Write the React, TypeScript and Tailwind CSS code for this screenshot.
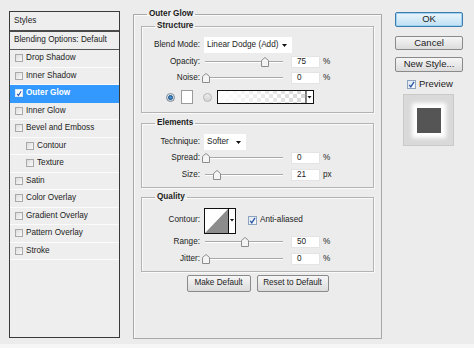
import React from 'react';

const styleItems = [
  { label: 'Drop Shadow' },
  { label: 'Inner Shadow' },
  { label: 'Outer Glow', on: true },
  { label: 'Inner Glow' },
  { label: 'Bevel and Emboss' },
  { label: 'Contour', sub: true },
  { label: 'Texture', sub: true },
  { label: 'Satin' },
  { label: 'Color Overlay' },
  { label: 'Gradient Overlay' },
  { label: 'Pattern Overlay' },
  { label: 'Stroke' },
];

function Tick() {
  return (
    <svg width="7" height="7" viewBox="0 0 7 7">
      <path d="M1.2 3.8 L2.8 5.8 L6 0.8" fill="none" stroke="#2b56a8" strokeWidth="1.3" />
    </svg>
  );
}

function CheckBox({ on, light }: { on?: boolean; light?: boolean }) {
  return (
    <span
      className={
        'flex h-[8px] w-[8px] shrink-0 items-center justify-center border ' +
        (light ? 'border-[#d8e6f6] bg-white' : 'border-[#a9a9a9] bg-gradient-to-br from-[#dcdcdc] to-[#fafafa]')
      }
    >
      {on && <Tick />}
    </span>
  );
}

function Arrow() {
  return (
    <svg width="5" height="3" viewBox="0 0 5 3">
      <path d="M0 0h5L2.5 3z" fill="#111" />
    </svg>
  );
}

function Slider({ pos }: { pos: number }) {
  return (
    <div className="relative flex h-[16px] w-[78px] items-center">
      <div className="h-[2px] w-full border-t border-[#a8a8a8] bg-white" />
      <svg className="absolute top-[3px]" style={{ left: pos - 4 }} width="8" height="10" viewBox="0 0 8 10">
        <path d="M0.5 3.5 L4 0.5 L7.5 3.5 V9.5 H0.5 Z" fill="#f4f4f4" stroke="#8c8c8c" />
      </svg>
    </div>
  );
}

function SliderRow({ label, value, pos, unit, mt }: { label: string; value: string; pos: number; unit: string; mt?: string }) {
  return (
    <div className={'flex h-[16px] items-center ' + (mt ?? '')}>
      <span className="w-[58px] text-right">{label}</span>
      <div className="ml-[5px]">
        <Slider pos={pos} />
      </div>
      <div className="ml-[8px] h-[12px] w-[29px] border border-[#e4e4e4] bg-white pl-[5px] leading-[10px]">{value}</div>
      <span className="ml-[3px]">{unit}</span>
    </div>
  );
}

function Group({ title, className, children }: { title: string; className?: string; children: React.ReactNode }) {
  return (
    <fieldset className={'w-full border border-[#b3b3b3] shadow-[inset_1px_1px_0_#fafafa,1px_1px_0_#fafafa] ' + (className ?? '')}>
      <legend className="ml-[13px] px-[2px] font-bold leading-[12px]">{title}</legend>
      {children}
    </fieldset>
  );
}

function Button({ children, className }: { children: React.ReactNode; className?: string }) {
  return (
    <div
      className={
        'flex items-center justify-center rounded-[2px] border border-[#8a8a8a] bg-gradient-to-b from-[#f6f6f6] to-[#dcdcdc] ' +
        (className ?? '')
      }
    >
      {children}
    </div>
  );
}

export default function App() {
  return (
    <div className="h-[348px] w-[474px] overflow-hidden border-b-[4px] border-[#f6f6f6] bg-[#ececec] font-['Liberation_Sans',Arial,sans-serif] text-[8.2px] text-[#1c1c1c]">
      <div className="flex pl-[9px] pt-[8px]">
        {/* styles list */}
        <div className="mt-[3px] flex h-[327px] w-[111px] flex-col border border-[#3a3a3a] bg-[#eeeeee]">
          <div className="flex h-[20px] shrink-0 items-center border-b-2 border-[#4a4a4a] pl-[4px]">Styles</div>
          <div className="flex h-[18px] shrink-0 items-center border-b border-[#555] pl-[4px]">Blending Options: Default</div>
          {styleItems.map((it) => (
            <div
              key={it.label}
              className={
                'flex h-[17.5px] shrink-0 items-center gap-[3px] border-b ' +
                (it.sub ? 'pl-[16px] ' : 'pl-[5px] ') +
                (it.on ? 'border-[#3399ff] bg-[#3399ff] font-bold text-white' : 'border-[#fbfbfb]')
              }
            >
              <CheckBox on={it.on} light={it.on} />
              <span>{it.label}</span>
            </div>
          ))}
        </div>

        {/* main panel */}
        <fieldset className="ml-[13px] h-[331px] w-[249px] border border-[#a9a9a9] px-[7px] shadow-[inset_1px_1px_0_#fafafa]">
          <legend className="ml-[6px] px-[2px] font-bold leading-[12px]">Outer Glow</legend>

          <Group title="Structure" className="pb-[8px] pt-[5px]">
            <div className="flex h-[16px] items-center">
              <span className="w-[58px] text-right">Blend Mode:</span>
              <div className="ml-[4px] flex h-[16px] w-[88px] items-center justify-between bg-white pl-[3px] pr-[5px]">
                <span>Linear Dodge (Add)</span>
                <Arrow />
              </div>
            </div>
            <SliderRow label="Opacity:" value="75" pos={60} unit="%" mt="mt-[1px]" />
            <SliderRow label="Noise:" value="0" pos={1} unit="%" />
            <div className="mt-[4px] flex h-[14px] items-center">
              <span className="ml-[24px] flex h-[9px] w-[9px] items-center justify-center rounded-full border border-[#7a8a99] bg-gradient-to-b from-[#e9eef3] to-[#c4ced8]">
                <span className="h-[5px] w-[5px] rounded-full border border-[#1d4f7a] bg-[#3f8ad0]" />
              </span>
              <span className="ml-[6px] h-[14px] w-[12px] border border-[#9a9a9a] bg-white" />
              <span className="ml-[10px] h-[9px] w-[9px] rounded-full border border-[#b5b5b5] bg-gradient-to-b from-[#eeeeee] to-[#d4d4d4]" />
              <svg className="ml-[5px]" width="97" height="14" viewBox="0 0 97 14">
                <defs>
                  <pattern id="chk" width="8" height="8" patternUnits="userSpaceOnUse">
                    <rect width="8" height="8" fill="#fff" />
                    <rect width="4" height="4" fill="#d6d6d6" />
                    <rect x="4" y="4" width="4" height="4" fill="#d6d6d6" />
                  </pattern>
                  <linearGradient id="fade" x1="0" x2="1" y1="0" y2="0">
                    <stop offset="0" stopColor="#fff" stopOpacity="1" />
                    <stop offset="1" stopColor="#fff" stopOpacity="0" />
                  </linearGradient>
                </defs>
                <rect x="1" y="1" width="88" height="12" fill="url(#chk)" />
                <rect x="1" y="1" width="88" height="12" fill="url(#fade)" />
                <rect x="89" y="1" width="7" height="12" fill="#fff" />
                <path d="M90.5 6h4L92.5 8.5z" fill="#111" />
                <rect x="0.5" y="0.5" width="96" height="13" fill="none" stroke="#111" />
                <line x1="89" y1="1" x2="89" y2="13" stroke="#111" />
              </svg>
            </div>
          </Group>

          <Group title="Elements" className="mt-[4px] pb-[4px] pt-[5px]">
            <div className="flex h-[16px] items-center">
              <span className="w-[58px] text-right">Technique:</span>
              <div className="ml-[4px] flex h-[16px] w-[42px] items-center justify-between bg-white pl-[3px] pr-[5px]">
                <span>Softer</span>
                <Arrow />
              </div>
            </div>
            <SliderRow label="Spread:" value="0" pos={1} unit="%" />
            <SliderRow label="Size:" value="21" pos={12} unit="px" mt="mt-[1px]" />
          </Group>

          <Group title="Quality" className="mt-[3px] pb-[4px] pt-[5px]">
            <div className="flex h-[25px] items-center">
              <span className="w-[58px] text-right">Contour:</span>
              <svg className="ml-[4px]" width="32" height="26" viewBox="0 0 32 26">
                <rect x="0.5" y="0.5" width="31" height="25" fill="#fff" stroke="#111" />
                <path d="M1 25 L24 1 V25 Z" fill="#8c8c8c" />
                <line x1="24.5" y1="1" x2="24.5" y2="25" stroke="#111" />
                <path d="M26 11h4L28 13.5z" fill="#111" />
              </svg>
              <span className="ml-[12px] flex h-[9px] w-[9px] items-center justify-center border border-[#8ea3bd] bg-gradient-to-br from-[#dfe7f1] to-[#f7f9fc]">
                <Tick />
              </span>
              <span className="ml-[3px]">Anti-aliased</span>
            </div>
            <SliderRow label="Range:" value="50" pos={40} unit="%" mt="mt-[1px]" />
            <SliderRow label="Jitter:" value="0" pos={1} unit="%" mt="mt-[1px]" />
          </Group>

          <div className="mt-[3px] flex justify-center gap-[6px]">
            <Button className="h-[17px] w-[64px]">Make Default</Button>
            <Button className="h-[17px] w-[72px]">Reset to Default</Button>
          </div>
        </fieldset>

        {/* buttons */}
        <div className="ml-[13px] mt-[4px] flex w-[68px] flex-col text-[9.5px]">
          <div className="flex h-[15px] items-center justify-center rounded-[2px] border border-[#3d7bad] bg-gradient-to-b from-[#eaf5fc] to-[#bfe0f4] shadow-[inset_0_0_0_1px_#9fd3f2]">
            OK
          </div>
          <Button className="mt-[9px] h-[14px]">Cancel</Button>
          <Button className="mt-[7px] h-[15px]">New Style...</Button>
          <div className="mt-[5px] flex items-center pl-[12px]">
            <span className="flex h-[9px] w-[9px] items-center justify-center border border-[#8ea3bd] bg-gradient-to-br from-[#dfe7f1] to-[#f7f9fc]">
              <Tick />
            </span>
            <span className="ml-[3px]">Preview</span>
          </div>
          <div className="ml-[8px] mt-[3px] flex h-[52px] w-[51px] items-center justify-center border border-[#c9c9c9] bg-[#d9d9d9]">
            <div className="h-[25px] w-[24px] bg-[#555555] shadow-[0_0_4px_5px_#ffffff]" />
          </div>
        </div>
      </div>
    </div>
  );
}
